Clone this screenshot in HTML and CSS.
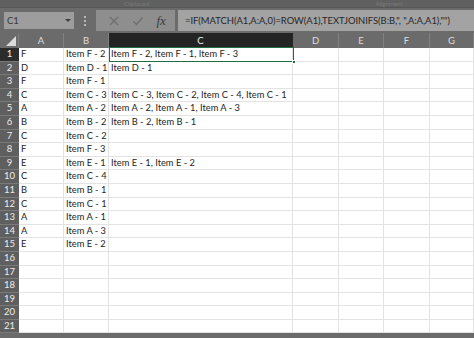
FILE: index.html
```html
<!DOCTYPE html>
<html>
<head>
<meta charset="utf-8">
<link rel="stylesheet" href="styles.css">
</head>
<body>
<div class="app">
  <div class="ribbon">
    <span class="group-label g1">Clipboard</span>
    <span class="group-label g2">Alignment</span>
  </div>
  <div class="fbar">
    <div class="namebox"><span>C1</span><span class="caret"></span></div>
    <div class="dots"><i></i><i></i><i></i></div>
    <div class="fbtns">
      <svg class="ico" width="12" height="12" viewBox="0 0 12 12"><path d="M2 2 L10 10 M10 2 L2 10" stroke="#6e6e6e" stroke-width="1.2" fill="none"/></svg>
      <svg class="ico" width="12" height="12" viewBox="0 0 12 12"><path d="M1.5 6.5 L4.5 9.5 L10.5 2.5" stroke="#6e6e6e" stroke-width="1.3" fill="none"/></svg>
      <span class="fx">fx</span>
    </div>
    <div class="finput">=IF(MATCH(A1,A:A,0)=ROW(A1),TEXTJOINIFS(B:B,", ",A:A,A1),"")</div>
  </div>
  <div class="wrap">
    <div class="sheet">
      <div class="corner"><span class="tri"></span></div>
      <div class="ch">A</div><div class="ch">B</div><div class="ch sel">C</div><div class="ch">D</div><div class="ch">E</div><div class="ch">F</div><div class="ch">G</div>

      <div class="rh sel">1</div><div class="c">F</div><div class="c">Item F - 2</div><div class="c">Item F - 2, Item F - 1, Item F - 3</div><div class="c"></div><div class="c"></div><div class="c"></div><div class="c"></div>
      <div class="rh">2</div><div class="c">D</div><div class="c">Item D - 1</div><div class="c">Item D - 1</div><div class="c"></div><div class="c"></div><div class="c"></div><div class="c"></div>
      <div class="rh">3</div><div class="c">F</div><div class="c">Item F - 1</div><div class="c"></div><div class="c"></div><div class="c"></div><div class="c"></div><div class="c"></div>
      <div class="rh">4</div><div class="c">C</div><div class="c">Item C - 3</div><div class="c">Item C - 3, Item C - 2, Item C - 4, Item C - 1</div><div class="c"></div><div class="c"></div><div class="c"></div><div class="c"></div>
      <div class="rh">5</div><div class="c">A</div><div class="c">Item A - 2</div><div class="c">Item A - 2, Item A - 1, Item A - 3</div><div class="c"></div><div class="c"></div><div class="c"></div><div class="c"></div>
      <div class="rh">6</div><div class="c">B</div><div class="c">Item B - 2</div><div class="c">Item B - 2, Item B - 1</div><div class="c"></div><div class="c"></div><div class="c"></div><div class="c"></div>
      <div class="rh">7</div><div class="c">C</div><div class="c">Item C - 2</div><div class="c"></div><div class="c"></div><div class="c"></div><div class="c"></div><div class="c"></div>
      <div class="rh">8</div><div class="c">F</div><div class="c">Item F - 3</div><div class="c"></div><div class="c"></div><div class="c"></div><div class="c"></div><div class="c"></div>
      <div class="rh">9</div><div class="c">E</div><div class="c">Item E - 1</div><div class="c">Item E - 1, Item E - 2</div><div class="c"></div><div class="c"></div><div class="c"></div><div class="c"></div>
      <div class="rh">10</div><div class="c">C</div><div class="c">Item C - 4</div><div class="c"></div><div class="c"></div><div class="c"></div><div class="c"></div><div class="c"></div>
      <div class="rh">11</div><div class="c">B</div><div class="c">Item B - 1</div><div class="c"></div><div class="c"></div><div class="c"></div><div class="c"></div><div class="c"></div>
      <div class="rh">12</div><div class="c">C</div><div class="c">Item C - 1</div><div class="c"></div><div class="c"></div><div class="c"></div><div class="c"></div><div class="c"></div>
      <div class="rh">13</div><div class="c">A</div><div class="c">Item A - 1</div><div class="c"></div><div class="c"></div><div class="c"></div><div class="c"></div><div class="c"></div>
      <div class="rh">14</div><div class="c">A</div><div class="c">Item A - 3</div><div class="c"></div><div class="c"></div><div class="c"></div><div class="c"></div><div class="c"></div>
      <div class="rh">15</div><div class="c">E</div><div class="c">Item E - 2</div><div class="c"></div><div class="c"></div><div class="c"></div><div class="c"></div><div class="c"></div>
      <div class="rh">16</div><div class="c"></div><div class="c"></div><div class="c"></div><div class="c"></div><div class="c"></div><div class="c"></div><div class="c"></div>
      <div class="rh">17</div><div class="c"></div><div class="c"></div><div class="c"></div><div class="c"></div><div class="c"></div><div class="c"></div><div class="c"></div>
      <div class="rh">18</div><div class="c"></div><div class="c"></div><div class="c"></div><div class="c"></div><div class="c"></div><div class="c"></div><div class="c"></div>
      <div class="rh">19</div><div class="c"></div><div class="c"></div><div class="c"></div><div class="c"></div><div class="c"></div><div class="c"></div><div class="c"></div>
      <div class="rh">20</div><div class="c"></div><div class="c"></div><div class="c"></div><div class="c"></div><div class="c"></div><div class="c"></div><div class="c"></div>
      <div class="rh">21</div><div class="c"></div><div class="c"></div><div class="c"></div><div class="c"></div><div class="c"></div><div class="c"></div><div class="c"></div>
    </div>
    <div class="selbox"><span class="handle"></span></div>
  </div>
</div>
</body>
</html>
```

FILE: styles.css
```css
* { box-sizing: border-box; }
html, body { margin: 0; padding: 0; }
body {
  width: 474px;
  height: 338px;
  overflow: hidden;
  background: #6b6b6b;
  font-family: Lato, "Open Sans", sans-serif;
}
.app { display: flex; flex-direction: column; }
.ribbon {
  height: 8px;
  background: #606060;
  border-bottom: 1px solid #565656;
  display: flex;
  align-items: center;
  overflow: hidden;
}
.group-label {
  font-size: 6px;
  line-height: 7px;
  color: #7a7a7a;
}
.g1 { margin-left: 124px; }
.g2 { margin-left: 226px; }
.fbar {
  height: 25px;
  display: flex;
  align-items: center;
  background: #6b6b6b;
  padding-left: 4px;
}
.namebox {
  width: 70px;
  height: 17px;
  background: #9d9d9d;
  display: flex;
  align-items: center;
  justify-content: space-between;
  padding: 0 3px 0 3px;
  font-size: 9.5px;
  color: #3a3a3a;
}
.caret {
  width: 0; height: 0;
  border-left: 3px solid transparent;
  border-right: 3px solid transparent;
  border-top: 3px solid #3e3e3e;
}
.dots {
  width: 22px;
  display: flex;
  flex-direction: column;
  align-items: center;
  gap: 2px;
}
.dots i { width: 2px; height: 2px; background: #b8b8b8; display: block; }
.fbtns {
  width: 79px;
  height: 21px;
  background: #8e8e8e;
  display: flex;
  align-items: center;
  justify-content: space-around;
  padding: 0 3px 0 6px;
}
.fx {
  font-family: "Liberation Serif", serif;
  font-style: italic;
  font-size: 13px;
  color: #3c3c3c;
}
.finput {
  flex: 1;
  height: 21px;
  margin-left: 3px;
  background: #a3a3a3;
  color: #262626;
  font-size: 9.4px;
  line-height: 21px;
  padding-left: 7px;
  white-space: nowrap;
  overflow: hidden;
}
.wrap { position: relative; }
.sheet {
  display: grid;
  grid-template-columns: 19px 45px 45px 184px 46px 45px 46px 44px;
  grid-template-rows: 15px;
  grid-auto-rows: 13.6px;
  background: #fff;
  font-size: 9.3px;
}
.corner {
  background: #6b6b6b;
  position: relative;
  border-right: 1px solid #7d7d7d;
}
.tri {
  position: absolute;
  right: 2px; bottom: 2px;
  width: 0; height: 0;
  border-left: 10px solid transparent;
  border-bottom: 10px solid #dcdcdc;
}
.ch {
  background: #6b6b6b;
  color: #dedede;
  text-align: center;
  line-height: 15px;
  border-right: 1px solid #808080;
  font-size: 9.5px;
}
.ch.sel { background: #242424; color: #f0f0f0; border-right-color: #242424; }
.rh {
  background: #5f5f5f;
  color: #ececec;
  text-align: center;
  border-bottom: 1px solid #7a7a7a;
  font-size: 9.5px;
  line-height: 12.6px;
}
.rh.sel { background: #2c2c2c; }
.c {
  border-right: 1px solid #e3e3e3;
  border-bottom: 1px solid #e3e3e3;
  color: #1e1e1e;
  padding-left: 2px;
  line-height: 12.6px;
  white-space: nowrap;
  overflow: visible;
}
.selbox {
  position: absolute;
  left: 109px;
  top: 14px;
  width: 185px;
  height: 15px;
  border: 1.5px solid #1f6e43;
  pointer-events: none;
}
.handle {
  position: absolute;
  right: -3px; bottom: -3px;
  width: 4px; height: 4px;
  background: #1f6e43;
  border: 1px solid #fff;
}
```
